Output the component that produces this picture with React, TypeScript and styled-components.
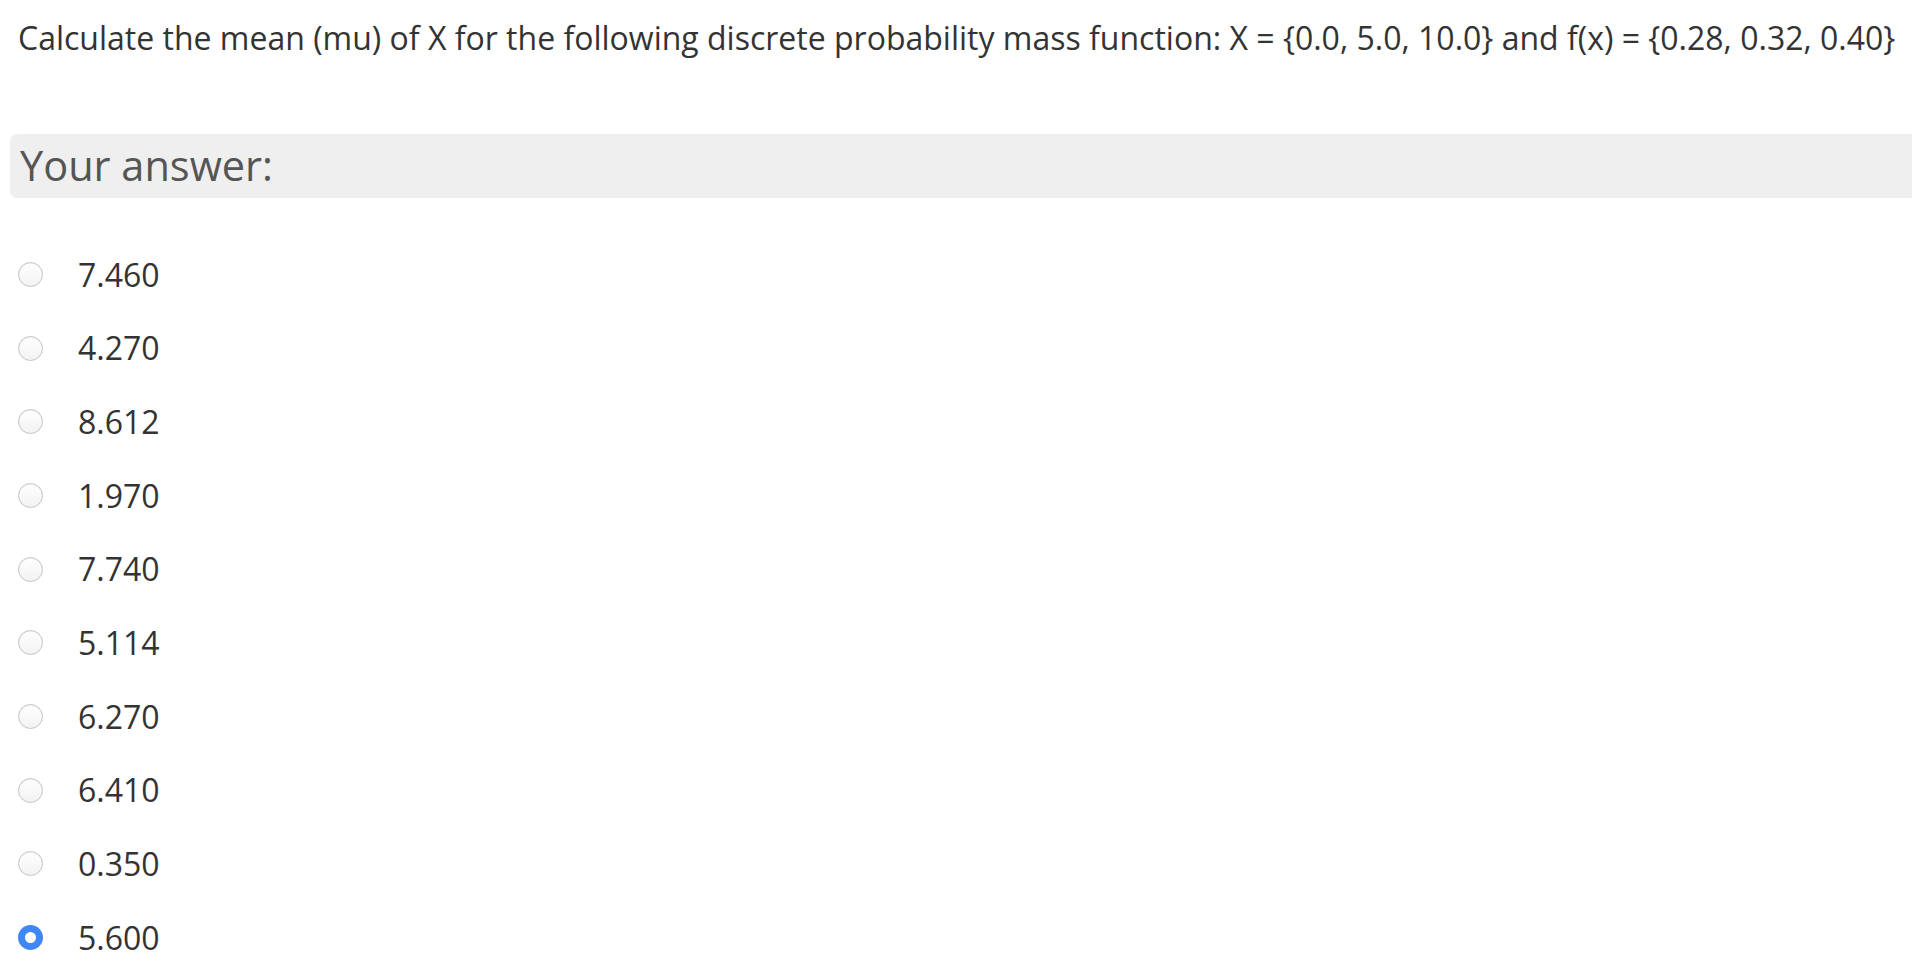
import React from "react";
import styled, { createGlobalStyle } from "styled-components";

const GlobalStyle = createGlobalStyle`
  html, body {
    margin: 0;
    padding: 0;
    background: #ffffff;
    overflow: hidden;
  }
  body {
    font-family: "Open Sans", "Noto Sans", "Liberation Sans", sans-serif;
    color: #333333;
  }
`;

const Page = styled.div`
  width: 100%;
  display: flex;
  flex-direction: column;
  padding-top: 16px;
`;

const Question = styled.div`
  font-size: 32px;
  line-height: 1.362;
  color: #333333;
  padding: 0 18px;
  white-space: nowrap;
`;

const AnswerHeader = styled.div`
  margin: 74px 0 0 10px;
  height: 64px;
  display: flex;
  align-items: center;
  background: #efefef;
  border-radius: 7px 0 0 7px;
  padding-left: 10px;
  font-size: 41.5px;
  line-height: 1.362;
  color: #555555;
`;

const OptionList = styled.div`
  display: flex;
  flex-direction: column;
  margin-top: 40px;
`;

const Option = styled.label`
  height: 73.7px;
  display: flex;
  align-items: center;
  padding-left: 18px;
  gap: 35px;
  cursor: pointer;
`;

const Radio = styled.span<{ $checked?: boolean }>`
  width: 25px;
  height: 25px;
  box-sizing: border-box;
  border-radius: 50%;
  flex-shrink: 0;
  display: flex;
  align-items: center;
  justify-content: center;
  border: ${(p) => (p.$checked ? "none" : "1px solid #c4c4c4")};
  background: ${(p) =>
    p.$checked ? "#3f86f6" : "linear-gradient(#ffffff, #f2f2f2)"};
  box-shadow: ${(p) => (p.$checked ? "none" : "inset 0 1px 1px rgba(0,0,0,0.06)")};

  &::after {
    content: "";
    display: ${(p) => (p.$checked ? "block" : "none")};
    width: 11px;
    height: 11px;
    border-radius: 50%;
    background: #ffffff;
  }
`;

const OptionText = styled.span`
  font-size: 32px;
  line-height: 1.362;
  color: #333333;
`;

const options = [
  "7.460",
  "4.270",
  "8.612",
  "1.970",
  "7.740",
  "5.114",
  "6.270",
  "6.410",
  "0.350",
  "5.600",
];

const App: React.FC = () => {
  const [selected, setSelected] = React.useState("5.600");

  return (
    <Page>
      <GlobalStyle />
      <Question>
        Calculate the mean (mu) of X for the following discrete probability
        mass function: X = {"{"}0.0, 5.0, 10.0{"}"} and f(x) = {"{"}0.28, 0.32,
        0.40{"}"}
      </Question>
      <AnswerHeader>Your answer:</AnswerHeader>
      <OptionList>
        {options.map((value) => (
          <Option key={value} onClick={() => setSelected(value)}>
            <Radio $checked={selected === value} />
            <OptionText>{value}</OptionText>
          </Option>
        ))}
      </OptionList>
    </Page>
  );
};

export default App;
